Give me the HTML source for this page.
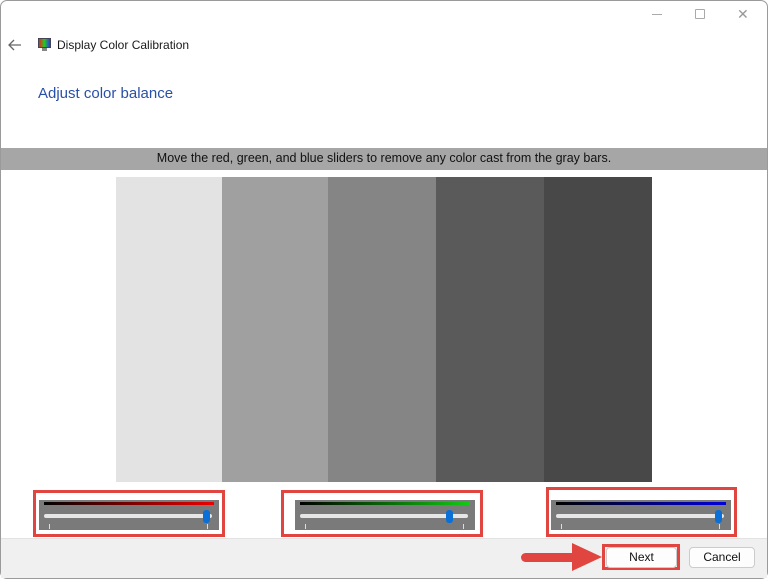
<!DOCTYPE html>
<html><head><style>
*{margin:0;padding:0;box-sizing:border-box}
body{width:768px;height:579px;background:#fff;position:relative;overflow:hidden;font-family:"Liberation Sans",sans-serif}
.a{position:absolute}
.win{left:0;top:0;width:768px;height:579px;border:1px solid #9a9a9a;border-radius:7px;background:#fff;overflow:hidden}
.rb{position:absolute;border:3px solid #e0463f}
.pn{position:absolute;background:#7a7a7a}
.cb{position:absolute;height:3px}
.tr{position:absolute;height:4px;background:#e6e6e6;border-radius:2px}
.th{position:absolute;width:7px;height:13px;background:#0a6fd6;border-radius:3px}
.tk{position:absolute;width:1px;height:5px;background:#ddd}
.btn{position:absolute;height:21px;background:#fdfdfd;border:1px solid #ccc;border-radius:4px;font-size:12px;text-align:center;line-height:19px;color:#111}
</style></head><body>
<div class="a win"></div>
<div class="a" style="left:652px;top:14px;width:10px;height:1px;background:#aaa"></div>
<div class="a" style="left:695px;top:9px;width:10px;height:10px;border:1px solid #aaa;border-radius:1px"></div>
<div class="a" style="left:737px;top:6px;font-size:14px;color:#999">✕</div>
<svg class="a" style="left:7px;top:38px" width="16" height="14"><path d="M14 7H2M7 2L2 7l5 5" stroke="#666" stroke-width="1.3" fill="none"/></svg>
<div class="a" style="left:38px;top:38px;width:13px;height:10px;background:linear-gradient(90deg,#e22,#2c2,#33e);border:1px solid #445"></div>
<div class="a" style="left:42px;top:48px;width:5px;height:3px;background:#888"></div>
<div class="a" style="left:57px;top:38px;font-size:12px;color:#1a1a1a">Display Color Calibration</div>
<div class="a" style="left:38px;top:85px;font-size:15px;color:#2a4fa8">Adjust color balance</div>
<div class="a" style="left:1px;top:148px;width:766px;height:22px;background:#a6a6a6;font-size:12.5px;text-align:center;line-height:20px;color:#111">Move the red, green, and blue sliders to remove any color cast from the gray bars.</div>
<div class="a" style="left:116px;top:177px;width:106px;height:305px;background:#e3e3e3"></div>
<div class="a" style="left:222px;top:177px;width:106px;height:305px;background:#a0a0a0"></div>
<div class="a" style="left:328px;top:177px;width:108px;height:305px;background:#858585"></div>
<div class="a" style="left:436px;top:177px;width:108px;height:305px;background:#5a5a5a"></div>
<div class="a" style="left:544px;top:177px;width:108px;height:305px;background:#484848"></div>

<div class="rb" style="left:33px;top:490px;width:192px;height:47px"></div>
<div class="pn" style="left:39px;top:500px;width:180px;height:30px"></div>
<div class="cb" style="left:44px;top:502px;width:170px;background:linear-gradient(90deg,#000,#e00)"></div>
<div class="tr" style="left:44px;top:514px;width:168px"></div>
<div class="th" style="left:203px;top:510px"></div>
<div class="tk" style="left:49px;top:524px"></div><div class="tk" style="left:207px;top:524px"></div>

<div class="rb" style="left:281px;top:490px;width:202px;height:47px"></div>
<div class="pn" style="left:295px;top:500px;width:180px;height:30px"></div>
<div class="cb" style="left:300px;top:502px;width:170px;background:linear-gradient(90deg,#000,#1c1)"></div>
<div class="tr" style="left:300px;top:514px;width:168px"></div>
<div class="th" style="left:446px;top:510px"></div>
<div class="tk" style="left:305px;top:524px"></div><div class="tk" style="left:463px;top:524px"></div>

<div class="rb" style="left:546px;top:487px;width:191px;height:50px"></div>
<div class="pn" style="left:551px;top:500px;width:180px;height:30px"></div>
<div class="cb" style="left:556px;top:502px;width:170px;background:linear-gradient(90deg,#000,#00d)"></div>
<div class="tr" style="left:556px;top:514px;width:168px"></div>
<div class="th" style="left:715px;top:510px"></div>
<div class="tk" style="left:561px;top:524px"></div><div class="tk" style="left:719px;top:524px"></div>

<div class="a" style="left:1px;top:538px;width:766px;height:40px;background:#f0f0f0;border-top:1px solid #e2e2e2"></div>
<div class="a" style="left:521px;top:553px;width:58px;height:9px;background:#e0463f;border-radius:5px"></div>
<svg class="a" style="left:572px;top:541px" width="32" height="32"><path d="M0 2L30 16L0 30Z" fill="#e0463f"/></svg>
<div class="rb" style="left:602px;top:544px;width:78px;height:26px"></div>
<div class="btn" style="left:606px;top:547px;width:71px">Next</div>
<div class="btn" style="left:689px;top:547px;width:66px">Cancel</div>
</body></html>
